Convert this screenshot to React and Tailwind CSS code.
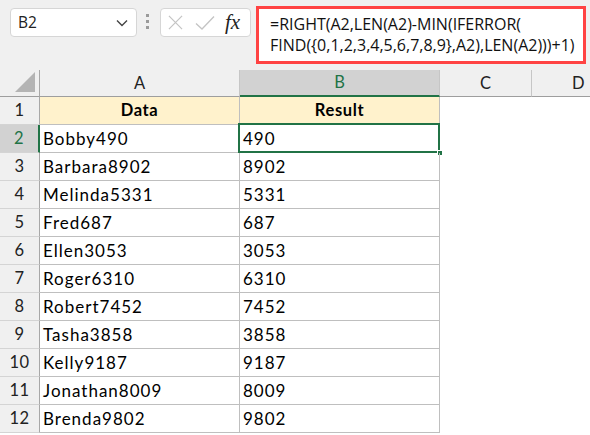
import React from "react";

const rows = [
  ["Bobby490", "490"],
  ["Barbara8902", "8902"],
  ["Melinda5331", "5331"],
  ["Fred687", "687"],
  ["Ellen3053", "3053"],
  ["Roger6310", "6310"],
  ["Robert7452", "7452"],
  ["Tasha3858", "3858"],
  ["Kelly9187", "9187"],
  ["Jonathan8009", "8009"],
  ["Brenda9802", "9802"],
];

const cellFont = { fontFamily: "Lato, 'Open Sans', sans-serif" };

function RowHead({ n, active }) {
  return (
    <div
      className={
        "h-[28px] flex items-center justify-center border-b border-b-[#d4d4d4] text-[16.5px] tracking-[0.5px] " +
        (active
          ? "bg-[#d2d2d2] text-[#217346] border-r-2 border-r-[#217346]"
          : "bg-[#f0f0f0] text-[#222] border-r border-r-[#a8a8a8]")
      }
    >
      {n}
    </div>
  );
}

export default function App() {
  return (
    <div className="w-[590px] h-[435px] bg-white overflow-hidden" style={cellFont}>
      {/* Toolbar / formula bar */}
      <div className="h-[70px] bg-[#f0f0f0] flex items-start">
        <div className="mt-[8px] ml-[10px] w-[127px] h-[29px] bg-white border border-[#d6d6d6] rounded-[4px] flex items-center justify-between pl-[7px] pr-[8px]">
          <span className="text-[15.5px] text-[#222]" style={{ fontFamily: "'Open Sans', sans-serif" }}>B2</span>
          <svg width="12" height="8" viewBox="0 0 12 8">
            <path d="M1 1.5 L6 6.5 L11 1.5" fill="none" stroke="#444" strokeWidth="1.4" />
          </svg>
        </div>
        <div className="mt-[14px] ml-[9px] w-[4px] flex flex-col gap-[3px]">
          <div className="w-[3px] h-[3px] bg-[#9a9a9a]" />
          <div className="w-[3px] h-[3px] bg-[#9a9a9a]" />
          <div className="w-[3px] h-[3px] bg-[#9a9a9a]" />
        </div>
        <div className="mt-[8px] ml-[10px] w-[91px] h-[29px] bg-white border border-[#d6d6d6] rounded-[4px] flex items-center pl-[7px]">
          <svg width="15" height="15" viewBox="0 0 16 16">
            <path d="M1 1 L15 15 M15 1 L1 15" stroke="#c4c4c4" strokeWidth="1.3" />
          </svg>
          <svg width="20" height="16" viewBox="0 0 20 16" className="ml-[12px]">
            <path d="M1 8.5 L7 14 L19 1.5" fill="none" stroke="#c4c4c4" strokeWidth="1.3" />
          </svg>
          <span
            className="ml-[10px] text-[21px] italic text-[#222] leading-none"
            style={{ fontFamily: "'Liberation Serif', 'DejaVu Serif', serif" }}
          >
            fx
          </span>
        </div>
        <div
          className="mt-[6px] ml-[5px] w-[330px] h-[58px] bg-white border-[3px] border-[#ff4343] pl-[11px] pt-[5px] text-[16px] leading-[21px] text-[#111]"
          style={{ fontFamily: "'Open Sans', sans-serif" }}
        >
          <div>=RIGHT(A2,LEN(A2)-MIN(IFERROR(</div>
          <div>FIND({"{"}0,1,2,3,4,5,6,7,8,9{"}"},A2),LEN(A2)))+1)</div>
        </div>
      </div>

      {/* Grid */}
      <div className="grid grid-cols-[40px_200px_200px_92px_1fr]">
        {/* column headers */}
        <div className="h-[27px] bg-[#f0f0f0] border-r border-r-[#a8a8a8] border-b border-b-[#9e9e9e] flex items-end justify-end pr-[4px] pb-[4px]">
          <svg width="20" height="20" viewBox="0 0 20 20">
            <path d="M20 0 L20 20 L0 20 Z" fill="#b4b4b4" />
          </svg>
        </div>
        <div className="h-[27px] bg-[#f0f0f0] border-r border-r-[#c6c6c6] border-b border-b-[#9e9e9e] flex items-center justify-center text-[16.5px] text-[#222]">A</div>
        <div className="h-[27px] bg-[#d2d2d2] border-r border-r-[#c6c6c6] border-b-2 border-b-[#217346] flex items-center justify-center text-[16.5px] text-[#217346]">B</div>
        <div className="h-[27px] bg-[#f0f0f0] border-r border-r-[#c6c6c6] border-b border-b-[#9e9e9e] flex items-center justify-center text-[16.5px] text-[#222]">C</div>
        <div className="h-[27px] bg-[#f0f0f0] border-b border-b-[#9e9e9e] flex items-center pl-[40px] text-[16.5px] text-[#222]">D</div>

        {/* row 1 */}
        <RowHead n={1} />
        <div className="h-[28px] bg-[#fff2cc] border-r border-b border-[#bfbfbf] flex items-center justify-center font-bold text-[16.5px] tracking-[0.6px] text-black">Data</div>
        <div className="h-[28px] bg-[#fff2cc] border-r border-b border-[#bfbfbf] flex items-center justify-center font-bold text-[16.5px] tracking-[0.6px] text-black">Result</div>
        <div className="h-[28px]" />
        <div className="h-[28px]" />

        {rows.map(([a, b], i) => {
          const n = i + 2;
          const active = n === 2;
          return (
            <React.Fragment key={n}>
              <RowHead n={n} active={active} />
              <div className="h-[28px] border-r border-b border-[#bfbfbf] flex items-center pl-[3px] text-[17px] tracking-[1px] text-black">{a}</div>
              <div className="relative h-[28px] border-r border-b border-[#bfbfbf] flex items-center pl-[3px] text-[17px] tracking-[1px] text-black">
                {b}
                {active && (
                  <>
                    <div className="absolute left-[-2px] top-[-2px] right-[-1px] bottom-[-1px] border-2 border-[#217346] pointer-events-none" />
                    <div className="absolute right-[-4px] bottom-[-4px] w-[6px] h-[6px] bg-[#217346] border border-white" />
                  </>
                )}
              </div>
              <div className="h-[28px]" />
              <div className="h-[28px]" />
            </React.Fragment>
          );
        })}
      </div>
    </div>
  );
}
